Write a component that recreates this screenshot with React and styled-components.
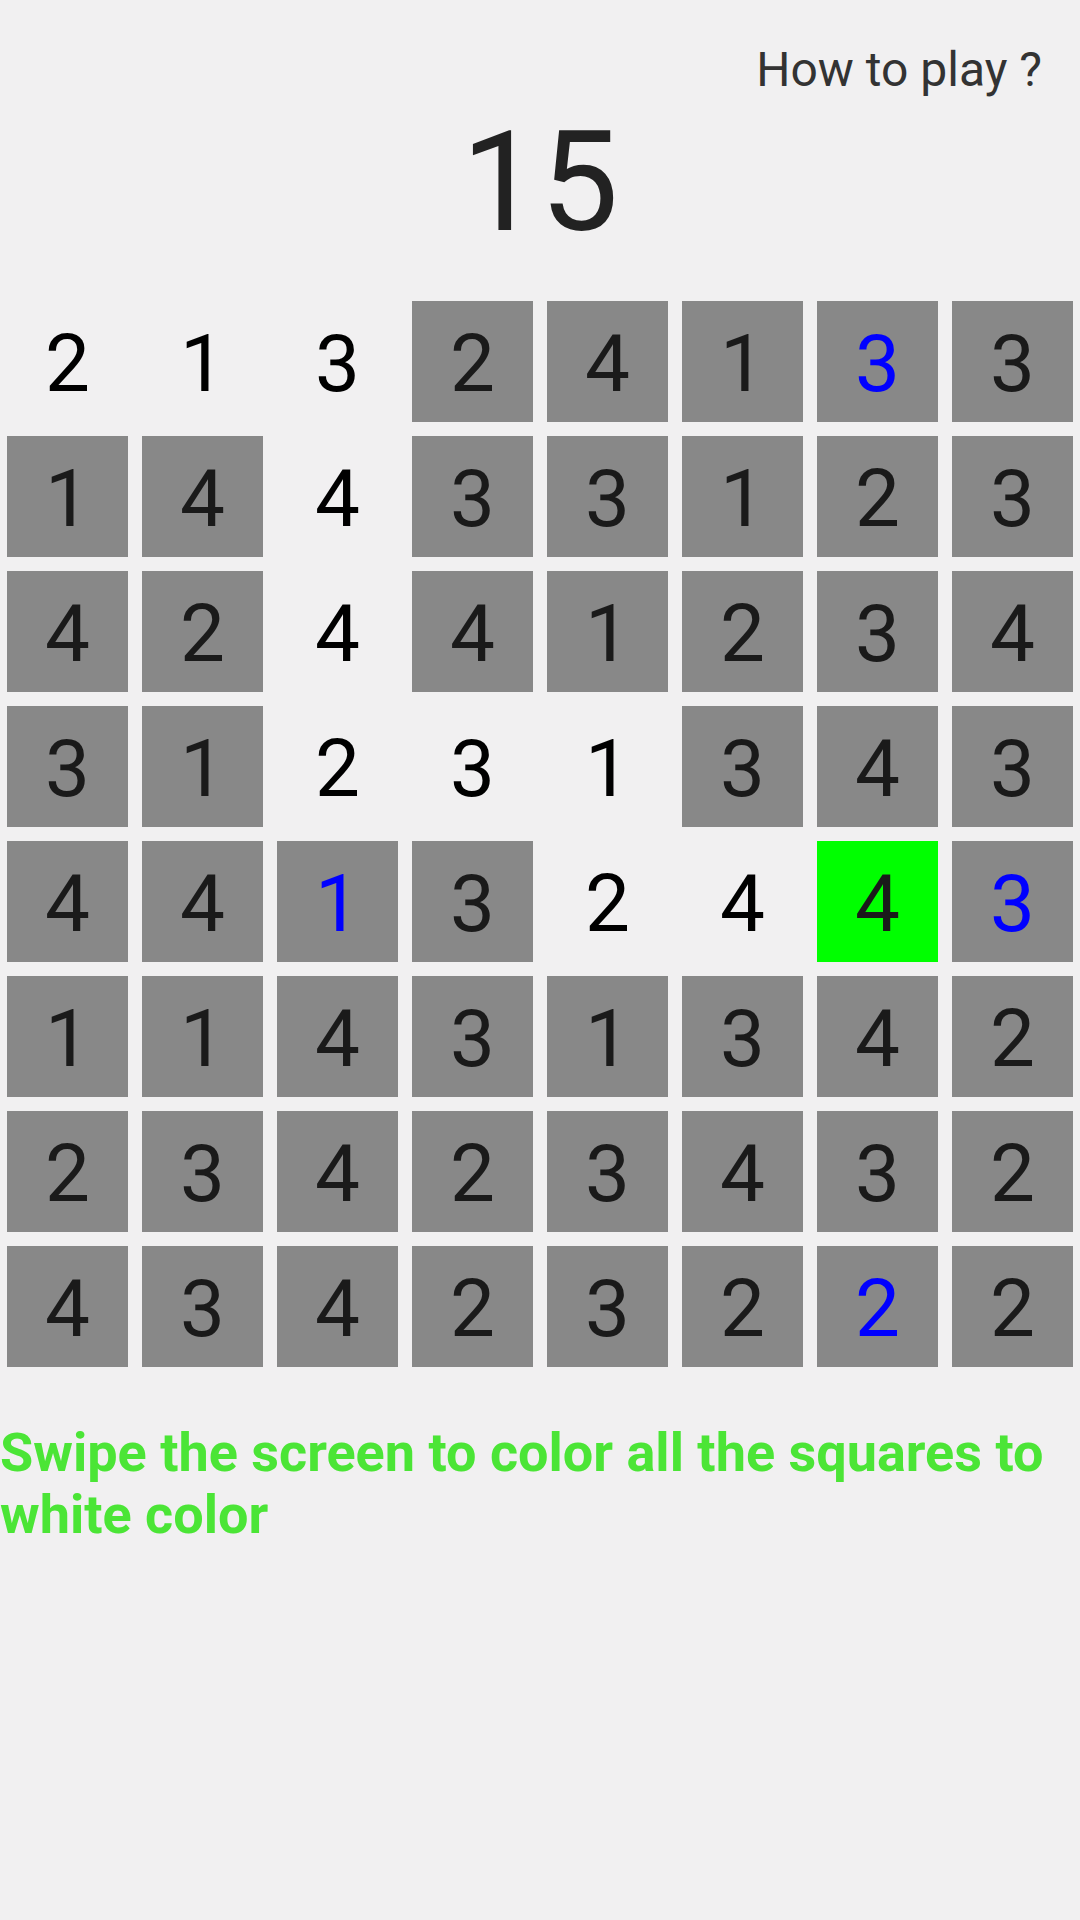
import React from 'react'
import styled, { createGlobalStyle } from 'styled-components'

const board = [
  ['2w', '1w', '3w', '2g', '4g', '1g', '3gb', '3g'],
  ['1g', '4g', '4w', '3g', '3g', '1g', '2g', '3g'],
  ['4g', '2g', '4w', '4g', '1g', '2g', '3g', '4g'],
  ['3g', '1g', '2w', '3w', '1w', '3g', '4g', '3g'],
  ['4g', '4g', '1gb', '3g', '2w', '4w', '4s', '3gb'],
  ['1g', '1g', '4g', '3g', '1g', '3g', '4g', '2g'],
  ['2g', '3g', '4g', '2g', '3g', '4g', '3g', '2g'],
  ['4g', '3g', '4g', '2g', '3g', '2g', '2gb', '2g'],
]

const tileColors = {
  w: 'transparent',
  g: '#888888',
  s: '#00ff00',
}

export default function App() {
  return (
    <>
      <GlobalStyle />
      <Screen>
        <Header>
          <HelpLink href="#">How to play ?</HelpLink>
        </Header>
        <Moves>15</Moves>
        <Board>
          {board.map((row, r) =>
            row.map((cell, c) => {
              const kind = cell[1]
              const blue = cell[2] === 'b'
              return (
                <Tile key={r + '-' + c} $bg={tileColors[kind]} $kind={kind} $blue={blue}>
                  {cell[0]}
                </Tile>
              )
            })
          )}
        </Board>
        <Hint>Swipe the screen to color all the squares to white color</Hint>
      </Screen>
    </>
  )
}

const GlobalStyle = createGlobalStyle`
  html, body {
    margin: 0;
    padding: 0;
    background: #f1f0f1;
  }
  body {
    font-family: Roboto, "Noto Sans", "Liberation Sans", sans-serif;
  }
`

const Screen = styled.div`
  width: 1080px;
  min-height: 1920px;
  background: #f1f0f1;
  display: flex;
  flex-direction: column;
`

const Header = styled.div`
  display: flex;
  justify-content: flex-end;
  padding: 46px 38px 0 0;
`

const HelpLink = styled.a`
  font-size: 48px;
  line-height: 48px;
  color: #333333;
  text-decoration: none;
`

const Moves = styled.div`
  margin-top: 18px;
  text-align: center;
  font-size: 140px;
  line-height: 140px;
  color: #222222;
`

const Board = styled.div`
  margin-top: 42px;
  display: grid;
  grid-template-columns: repeat(8, 121.5px);
  grid-auto-rows: 121.5px;
  gap: 13.5px;
  padding: 6.75px;
`

const Tile = styled.div`
  display: flex;
  align-items: center;
  justify-content: center;
  padding-top: 4px;
  box-sizing: border-box;
  background: ${p => p.$bg};
  font-size: 80px;
  color: ${p => (p.$blue ? '#0000ff' : p.$kind === 'w' ? '#000000' : '#1a1a1a')};
`

const Hint = styled.p`
  margin: 48px 0 0 0;
  font-size: 54px;
  line-height: 62.4px;
  font-weight: bold;
  color: #4be536;
`
